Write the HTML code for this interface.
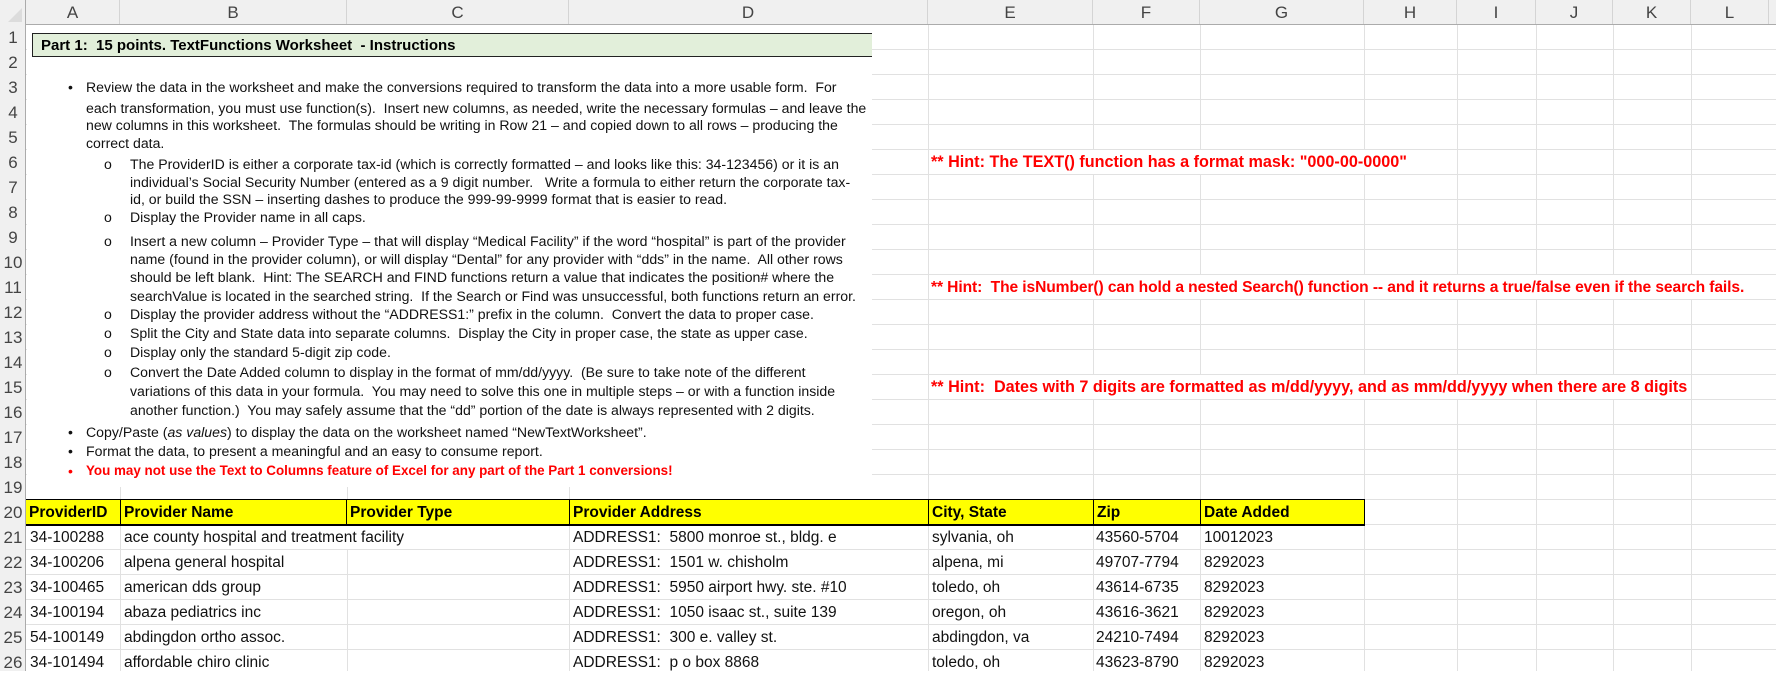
<!DOCTYPE html>
<html><head><meta charset="utf-8"><style>
body{margin:0;width:1776px;height:671px;overflow:hidden;background:#fff;font-family:"Liberation Sans",sans-serif;position:relative}
.vl{position:absolute;top:25px;width:1px;height:646px;background:#e1e1e1}
.ch{position:absolute;top:0;height:24px;line-height:26px;text-align:center;font-size:17px;color:#444;border-right:1px solid #d4d4d4}
.rn{position:absolute;left:0;width:26px;height:25px;line-height:26px;text-align:center;font-size:17px;color:#444}
.t{position:absolute;white-space:nowrap;font-size:14.1px;color:#111;line-height:18px}
.d{position:absolute;white-space:nowrap;font-size:15.5px;color:#111;line-height:25px}
.h{position:absolute;top:500px;height:24px;line-height:25px;font-size:15.5px;font-weight:bold;border-right:1px solid #000;padding-left:3px;box-sizing:border-box}
.hint{position:absolute;left:929px;height:24px;line-height:25px;color:#f00;font-weight:bold;font-size:16.2px;background:#fff;padding-left:2px;white-space:nowrap}
</style></head><body>
<div style="position:absolute;left:0;top:25px;width:1776px;height:646px;background:repeating-linear-gradient(to bottom,#fff 0,#fff 24px,#e1e1e1 24px,#e1e1e1 25px)"></div>
<div class="vl" style="left:120px"></div><div class="vl" style="left:347px"></div><div class="vl" style="left:569px"></div><div class="vl" style="left:928px"></div><div class="vl" style="left:1093px"></div><div class="vl" style="left:1200px"></div><div class="vl" style="left:1364px"></div><div class="vl" style="left:1457px"></div><div class="vl" style="left:1536px"></div><div class="vl" style="left:1613px"></div><div class="vl" style="left:1691px"></div>
<div style="position:absolute;left:0;top:0;width:1776px;height:24px;background:#f0f0f0;border-bottom:1px solid #ababab"></div>
<div style="position:absolute;left:0;top:0;width:26px;height:671px;background:#f0f0f0;border-right:1px solid #ababab;box-sizing:border-box"></div>
<div style="position:absolute;left:8px;top:8px;width:0;height:0;border-left:14px solid transparent;border-bottom:14px solid #dcdcdc"></div>
<div class="ch" style="left:26px;width:93px">A</div><div class="ch" style="left:120px;width:226px">B</div><div class="ch" style="left:347px;width:221px">C</div><div class="ch" style="left:569px;width:358px">D</div><div class="ch" style="left:928px;width:164px">E</div><div class="ch" style="left:1093px;width:106px">F</div><div class="ch" style="left:1200px;width:163px">G</div><div class="ch" style="left:1364px;width:92px">H</div><div class="ch" style="left:1457px;width:78px">I</div><div class="ch" style="left:1536px;width:76px">J</div><div class="ch" style="left:1613px;width:77px">K</div><div class="ch" style="left:1691px;width:77px">L</div>
<div class="rn" style="top:25px">1</div><div class="rn" style="top:50px">2</div><div class="rn" style="top:75px">3</div><div class="rn" style="top:100px">4</div><div class="rn" style="top:125px">5</div><div class="rn" style="top:150px">6</div><div class="rn" style="top:175px">7</div><div class="rn" style="top:200px">8</div><div class="rn" style="top:225px">9</div><div class="rn" style="top:250px">10</div><div class="rn" style="top:275px">11</div><div class="rn" style="top:300px">12</div><div class="rn" style="top:325px">13</div><div class="rn" style="top:350px">14</div><div class="rn" style="top:375px">15</div><div class="rn" style="top:400px">16</div><div class="rn" style="top:425px">17</div><div class="rn" style="top:450px">18</div><div class="rn" style="top:475px">19</div><div class="rn" style="top:500px">20</div><div class="rn" style="top:525px">21</div><div class="rn" style="top:550px">22</div><div class="rn" style="top:575px">23</div><div class="rn" style="top:600px">24</div><div class="rn" style="top:625px">25</div><div class="rn" style="top:650px">26</div>
<div style="position:absolute;left:27px;top:25px;width:845px;height:462px;background:#fff"></div>
<div style="position:absolute;left:32px;top:33px;width:840px;height:24px;background:#e2efda;border:1px solid #222;border-right:none;box-sizing:border-box;font-weight:bold;font-size:15px;line-height:23px;padding-left:8px;white-space:nowrap">Part 1:&nbsp; 15 points. TextFunctions Worksheet&nbsp; - Instructions</div>
<div class="t" style="left:68px;top:78px">•</div>
<div class="t" style="left:86px;top:78px">Review the data in the worksheet and make the conversions required to transform the data into a more usable form.&nbsp; For</div>
<div class="t" style="left:86px;top:99px">each transformation, you must use function(s).&nbsp; Insert new columns, as needed, write the necessary formulas – and leave the</div>
<div class="t" style="left:86px;top:116px">new columns in this worksheet.&nbsp; The formulas should be writing in Row 21 – and copied down to all rows – producing the</div>
<div class="t" style="left:86px;top:134px">correct data.</div>
<div class="t" style="left:104px;top:155px">o</div>
<div class="t" style="left:130px;top:155px">The ProviderID is either a corporate tax-id (which is correctly formatted – and looks like this: 34-123456) or it is an</div>
<div class="t" style="left:130px;top:173px">individual’s Social Security Number (entered as a 9 digit number.&nbsp;&nbsp; Write a formula to either return the corporate tax-</div>
<div class="t" style="left:130px;top:190px">id, or build the SSN – inserting dashes to produce the 999-99-9999 format that is easier to read.</div>
<div class="t" style="left:104px;top:208px">o</div><div class="t" style="left:130px;top:208px">Display the Provider name in all caps.</div>
<div class="t" style="left:104px;top:232px">o</div>
<div class="t" style="left:130px;top:232px">Insert a new column – Provider Type – that will display “Medical Facility” if the word “hospital” is part of the provider</div>
<div class="t" style="left:130px;top:250px">name (found in the provider column), or will display “Dental” for any provider with “dds” in the name.&nbsp; All other rows</div>
<div class="t" style="left:130px;top:268px">should be left blank.&nbsp; Hint: The SEARCH and FIND functions return a value that indicates the position# where the</div>
<div class="t" style="left:130px;top:287px">searchValue is located in the searched string.&nbsp; If the Search or Find was unsuccessful, both functions return an error.</div>
<div class="t" style="left:104px;top:305px">o</div><div class="t" style="left:130px;top:305px">Display the provider address without the “ADDRESS1:” prefix in the column.&nbsp; Convert the data to proper case.</div>
<div class="t" style="left:104px;top:324px">o</div><div class="t" style="left:130px;top:324px">Split the City and State data into separate columns.&nbsp; Display the City in proper case, the state as upper case.</div>
<div class="t" style="left:104px;top:343px">o</div><div class="t" style="left:130px;top:343px">Display only the standard 5-digit zip code.</div>
<div class="t" style="left:104px;top:363px">o</div>
<div class="t" style="left:130px;top:363px">Convert the Date Added column to display in the format of mm/dd/yyyy.&nbsp; (Be sure to take note of the different</div>
<div class="t" style="left:130px;top:382px">variations of this data in your formula.&nbsp; You may need to solve this one in multiple steps – or with a function inside</div>
<div class="t" style="left:130px;top:401px">another function.)&nbsp; You may safely assume that the “dd” portion of the date is always represented with 2 digits.</div>
<div class="t" style="left:68px;top:423px">•</div><div class="t" style="left:86px;top:423px">Copy/Paste (<i>as values</i>) to display the data on the worksheet named “NewTextWorksheet”.</div>
<div class="t" style="left:68px;top:442px">•</div><div class="t" style="left:86px;top:442px">Format the data, to present a meaningful and an easy to consume report.</div>
<div class="t" style="left:68px;top:462px;color:#f00">•</div><div class="t" style="left:86px;top:462px;color:#f00;font-weight:bold;font-size:13.4px">You may not use the Text to Columns feature of Excel for any part of the Part 1 conversions!</div>
<div class="hint" style="top:150px">** Hint: The TEXT() function has a format mask: "000-00-0000"</div>
<div class="hint" style="top:275px;font-size:15.6px;letter-spacing:-0.1px">** Hint:&nbsp; The isNumber() can hold a nested Search() function -- and it returns a true/false even if the search fails.</div>
<div class="hint" style="top:375px">** Hint:&nbsp; Dates with 7 digits are formatted as m/dd/yyyy, and as mm/dd/yyyy when there are 8 digits</div>
<div style="position:absolute;left:26px;top:499px;width:1339px;height:27px;background:#ff0;border-top:1px solid #000;border-bottom:2px solid #000;box-sizing:border-box"></div>
<div class="h" style="left:26px;width:95px">ProviderID</div>
<div class="h" style="left:121px;width:226px">Provider Name</div>
<div class="h" style="left:347px;width:223px">Provider Type</div>
<div class="h" style="left:570px;width:359px">Provider Address</div>
<div class="h" style="left:929px;width:165px">City, State</div>
<div class="h" style="left:1094px;width:107px">Zip</div>
<div class="h" style="left:1201px;width:164px">Date Added</div>
<div style="position:absolute;left:346px;top:526px;width:3px;height:23px;background:#fff"></div>
<div class="d" style="left:30px;top:525px">34-100288</div><div class="d" style="left:124px;top:525px">ace county hospital and treatment facility</div><div class="d" style="left:573px;top:525px">ADDRESS1:&nbsp; 5800 monroe st., bldg. e</div><div class="d" style="left:932px;top:525px">sylvania, oh</div><div class="d" style="left:1096px;top:525px">43560-5704</div><div class="d" style="left:1204px;top:525px">10012023</div>
<div class="d" style="left:30px;top:550px">34-100206</div><div class="d" style="left:124px;top:550px">alpena general hospital</div><div class="d" style="left:573px;top:550px">ADDRESS1:&nbsp; 1501 w. chisholm</div><div class="d" style="left:932px;top:550px">alpena, mi</div><div class="d" style="left:1096px;top:550px">49707-7794</div><div class="d" style="left:1204px;top:550px">8292023</div>
<div class="d" style="left:30px;top:575px">34-100465</div><div class="d" style="left:124px;top:575px">american dds group</div><div class="d" style="left:573px;top:575px">ADDRESS1:&nbsp; 5950 airport hwy. ste. #10</div><div class="d" style="left:932px;top:575px">toledo, oh</div><div class="d" style="left:1096px;top:575px">43614-6735</div><div class="d" style="left:1204px;top:575px">8292023</div>
<div class="d" style="left:30px;top:600px">34-100194</div><div class="d" style="left:124px;top:600px">abaza pediatrics inc</div><div class="d" style="left:573px;top:600px">ADDRESS1:&nbsp; 1050 isaac st., suite 139</div><div class="d" style="left:932px;top:600px">oregon, oh</div><div class="d" style="left:1096px;top:600px">43616-3621</div><div class="d" style="left:1204px;top:600px">8292023</div>
<div class="d" style="left:30px;top:625px">54-100149</div><div class="d" style="left:124px;top:625px">abdingdon ortho assoc.</div><div class="d" style="left:573px;top:625px">ADDRESS1:&nbsp; 300 e. valley st.</div><div class="d" style="left:932px;top:625px">abdingdon, va</div><div class="d" style="left:1096px;top:625px">24210-7494</div><div class="d" style="left:1204px;top:625px">8292023</div>
<div class="d" style="left:30px;top:650px">34-101494</div><div class="d" style="left:124px;top:650px">affordable chiro clinic</div><div class="d" style="left:573px;top:650px">ADDRESS1:&nbsp; p o box 8868</div><div class="d" style="left:932px;top:650px">toledo, oh</div><div class="d" style="left:1096px;top:650px">43623-8790</div><div class="d" style="left:1204px;top:650px">8292023</div>
</body></html>
